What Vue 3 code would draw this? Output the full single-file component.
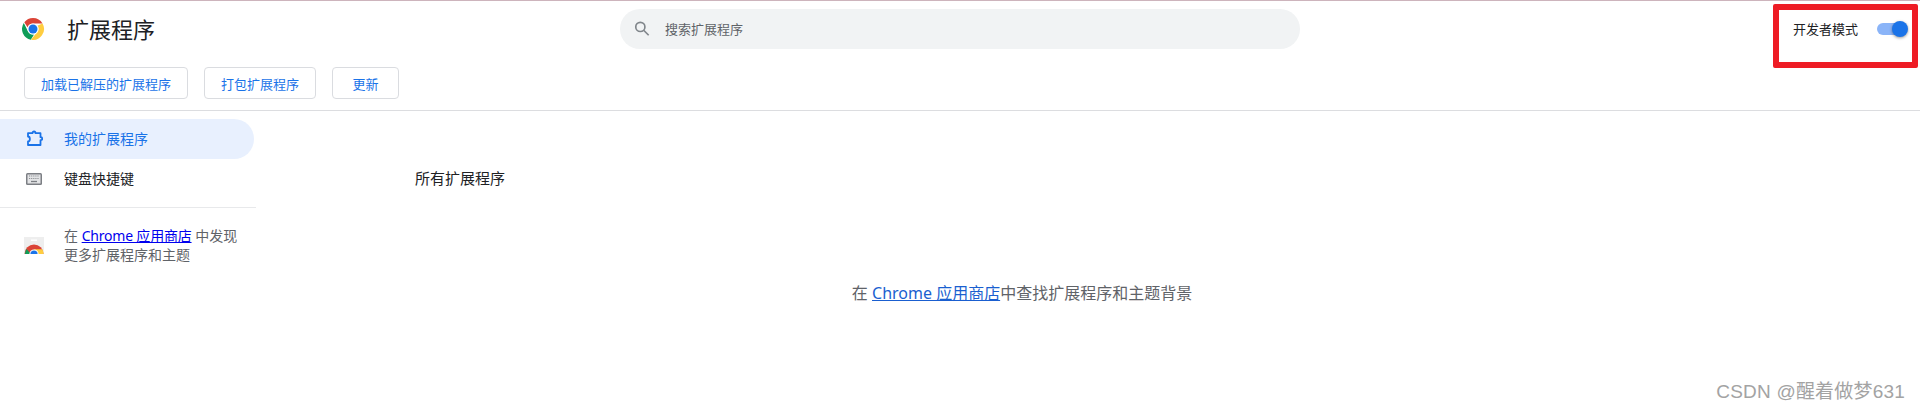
<template>
  <div class="page">
    <header class="top">
      <div class="top-row">
        <div class="brand">
          <svg class="logo" viewBox="0 0 24 24" width="24" height="24">
            <path :d="chromeRed" fill="#db4437" />
            <path :d="chromeGreen" fill="#0f9d58" />
            <path :d="chromeYellow" fill="#ffcd40" />
            <circle cx="12" cy="12" r="5.6" fill="#fff" />
            <circle cx="12" cy="12" r="4.5" fill="#1a73e8" />
          </svg>
          <h1 class="title">扩展程序</h1>
        </div>
        <div class="search">
          <svg viewBox="0 0 24 24" width="20" height="20">
            <circle cx="10" cy="9.5" r="5.5" fill="none" stroke="#80868b" stroke-width="2" />
            <path d="M14 13.5 20 19.5" stroke="#80868b" stroke-width="2" />
          </svg>
          <span>搜索扩展程序</span>
        </div>
        <div class="dev">
          <span>开发者模式</span>
          <div class="toggle"><i class="thumb"></i></div>
        </div>
      </div>
      <div class="tools">
        <button v-for="b in buttons" :key="b" class="btn">{{ b }}</button>
      </div>
    </header>

    <main class="main">
      <aside class="side">
        <div class="item active">
          <svg viewBox="0 0 18 18" width="18" height="18">
            <path
              d="M3 3.200H7.500C7.500 .9 10.500 .9 10.500 3.200H15.500V7.200C17.800 7.200 17.800 10.200 15.500 10.200V15H3V11.500C5.500 11.500 5.500 6.500 3 6.500Z"
              fill="none"
              stroke="#1a73e8"
              stroke-width="1.800"
              stroke-linejoin="round"
            />
          </svg>
          <span>我的扩展程序</span>
        </div>
        <div class="item">
          <svg viewBox="0 0 18 18" width="18" height="18">
            <rect x="1" y="3" width="16" height="12" rx="1.500" fill="#7c7f84" />
            <rect x="2.500" y="4.500" width="13" height="9" fill="#e3e4e6" />
            <path d="M4 6h10M4 8.500h10" stroke="#8d9094" stroke-width="1.200" stroke-dasharray="1.200 .9" />
            <path d="M6 11.500h6" stroke="#7c7f84" stroke-width="1.300" />
          </svg>
          <span>键盘快捷键</span>
        </div>
        <div class="rule"></div>
        <div class="promo">
          <svg class="store" viewBox="0 0 20 17" width="20" height="17">
            <rect width="20" height="17" fill="#eeeeee" />
            <rect x="7" y="2.500" width="6" height="1.500" fill="#fff" />
            <circle cx="10" cy="17" r="9.500" fill="#db4437" />
            <path d="M1 17a9.500 9.500 0 0 1 1.500-5L7 17z" fill="#0f9d58" />
            <path d="M19.500 17a9.500 9.500 0 0 0-1.200-4.700H10L13 17z" fill="#ffcd40" />
            <circle cx="10" cy="17" r="4.600" fill="#fff" />
            <circle cx="10" cy="17" r="3.600" fill="#1a73e8" />
          </svg>
          <p>在 <a class="link">Chrome 应用商店</a> 中发现<br />更多扩展程序和主题</p>
        </div>
      </aside>
      <section class="content">
        <h2 class="section">所有扩展程序</h2>
        <p class="empty">在 <a class="store-link">Chrome 应用商店</a>中查找扩展程序和主题背景</p>
      </section>
    </main>

    <div class="mark"></div>
    <div class="wm">CSDN @醒着做梦631</div>
  </div>
</template>

<script setup>
const buttons = ["加载已解压的扩展程序", "打包扩展程序", "更新"];

// chrome logo wedges, circle r=11 around 12,12
const chromeRed = "M12 1a11 11 0 0 1 9.530 5.500H12a5.500 5.500 0 0 0-5.300 4L3.300 5.300A11 11 0 0 1 12 1z";
const chromeGreen = "M2.800 6 7.200 14.800a5.500 5.500 0 0 0 5.800 2.600L9.800 22.800A11 11 0 0 1 2.800 6z";
const chromeYellow = "M21.530 6.500A11 11 0 0 1 10 22.800l4.800-6a5.500 5.500 0 0 0 1.500-8z";
</script>

<style>
body {
  background: #fff;
}
</style>

<style scoped>
.page {
  position: relative;
  width: 1920px;
  height: 412px;
  overflow: hidden;
  background: #fff;
  border-top: 1px solid #cdb4bc;
  box-sizing: border-box;
  font-family: "Noto Sans", "Noto Sans CJK SC", sans-serif;
  font-size: 14px;
  color: #202124;
}

.top {
  height: 109px;
  border-bottom: 1px solid #dcdde0;
}

.top-row {
  display: grid;
  grid-template-columns: 620px 680px 1fr;
  height: 66px;
  padding-top: 8px;
  box-sizing: border-box;
}

.brand {
  display: flex;
  align-items: center;
  height: 40px;
  padding-left: 21px;
}

.title {
  margin: 0 0 0 22px;
  font-size: 22px;
  font-weight: 400;
  line-height: 40px;
}

.search {
  display: flex;
  align-items: center;
  gap: 13px;
  height: 40px;
  padding-left: 12px;
  border-radius: 20px;
  background: #f1f3f4;
  font-size: 13px;
  color: #5f6368;
}

.search span {
  padding-bottom: 2px;
}

.dev {
  display: flex;
  align-items: center;
  height: 40px;
  padding-left: 493px;
  font-size: 13px;
}

.dev span {
  padding-bottom: 2px;
}

.toggle {
  position: relative;
  width: 28px;
  height: 12px;
  margin-left: 19px;
  border-radius: 6px;
  background: #8ab4f8;
}

.thumb {
  position: absolute;
  top: -2px;
  right: -3px;
  width: 16px;
  height: 16px;
  border-radius: 50%;
  background: #1a73e8;
  box-shadow: 0 1px 3px rgba(0, 0, 0, 0.4);
}

.tools {
  display: flex;
  gap: 16px;
  padding-left: 24px;
}

.btn {
  height: 32px;
  min-width: 67px;
  padding: 0 16px;
  border: 1px solid #dadce0;
  border-radius: 4px;
  background: #fff;
  color: #1a73e8;
  font: inherit;
  font-size: 13px;
}

.main {
  display: flex;
}

.side {
  width: 256px;
  padding-top: 8px;
  flex: none;
}

.item {
  display: flex;
  align-items: center;
  gap: 21px;
  width: 254px;
  height: 40px;
  padding-left: 25px;
  box-sizing: border-box;
  border-radius: 0 20px 20px 0;
}

.item span {
  padding-bottom: 2px;
}

.item.active {
  background: #e8f0fe;
  color: #1a73e8;
}

.rule {
  height: 1px;
  margin-top: 8px;
  background: #e8e9eb;
}

.promo {
  display: flex;
  align-items: flex-start;
  gap: 20px;
  padding: 18px 0 0 24px;
  color: #5f6368;
}

.store {
  margin-top: 11px;
  flex: none;
}

.promo p {
  margin: 0;
  line-height: 19px;
}

.link {
  color: #0000ee;
  text-decoration: underline;
  letter-spacing: -0.2px;
}

.content {
  width: 1214px;
  margin-left: 159px;
}

.section {
  margin: 0;
  padding-top: 57px;
  font-size: 15px;
  font-weight: 400;
  line-height: 20px;
}

.empty {
  margin: 94px 0 0;
  text-align: center;
  font-size: 16px;
  line-height: 22px;
  color: #5f6368;
}

.store-link {
  color: #1a5fd0;
  text-decoration: underline;
}

/* annotation drawn over the screenshot */
.mark {
  position: absolute;
  top: 3px;
  left: 1773px;
  width: 145px;
  height: 64px;
  box-sizing: border-box;
  border: 6px solid #ee1c25;
  border-radius: 2px;
}

.wm {
  position: absolute;
  right: 15px;
  bottom: 9px;
  font-family: "Liberation Sans", "Noto Sans CJK SC", sans-serif;
  font-size: 19px;
  letter-spacing: 0.2px;
  color: #a3a3a3;
}
</style>
